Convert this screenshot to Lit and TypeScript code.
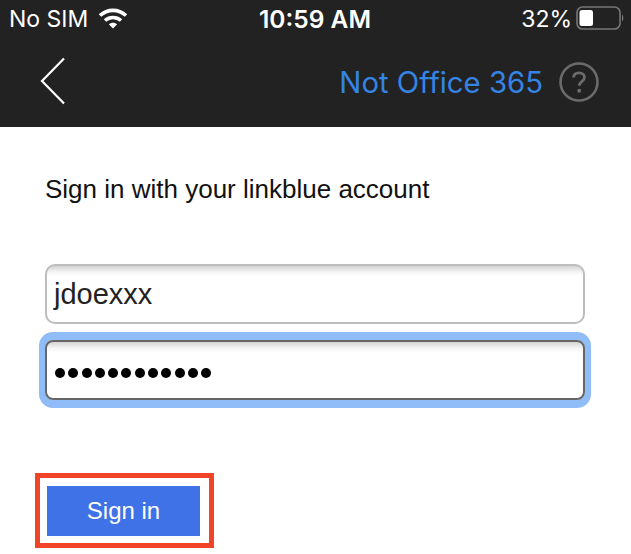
import { LitElement, css, html } from 'lit'
import { customElement } from 'lit/decorators.js'

@customElement('app-root')
export class AppRoot extends LitElement {
  static styles = css`
    :host {
      display: block;
      width: 631px;
      height: 554px;
      overflow: hidden;
      background: #fff;
      font-family: 'Liberation Sans', Arial, sans-serif;
    }
    .top {
      height: 127px;
      background: #222;
      box-sizing: border-box;
    }
    .status {
      height: 37px;
      display: grid;
      grid-template-columns: 1fr auto 1fr;
      align-items: center;
      padding: 0 7px 0 9px;
      color: #fff;
      font-family: Inter, 'Liberation Sans', sans-serif;
      font-size: 23px;
    }
    .status .left, .status .right {
      display: flex;
      align-items: center;
    }
    .status .left { gap: 10px; }
    .status .right { justify-content: flex-end; gap: 4px; }
    .time { font-weight: 600; font-size: 24.5px; margin-right: 3px; }
    .wifi { display: block; }
    .battery { display: block; margin-top: -1px; }
    .nav {
      height: 90px;
      display: flex;
      align-items: center;
      padding: 0 32px 0 39px;
      box-sizing: border-box;
    }
    .back { display: block; margin-top: -2px; }
    .title {
      margin-left: auto;
      color: #3584e4;
      font-family: Inter, 'Liberation Sans', sans-serif;
      font-size: 29.3px;
    }
    .help { display: block; margin-left: 16px; }
    .content {
      padding: 47px 46px 0 45px;
    }
    .lead {
      margin: 0;
      height: 30px;
      line-height: 30px;
      font-size: 26px;
      color: #111;
    }
    .fields {
      margin-top: 60px;
      display: flex;
      flex-direction: column;
      gap: 16px;
    }
    .field {
      height: 60px;
      box-sizing: border-box;
      border: 2px solid #bdbdbd;
      border-radius: 10px;
      background: linear-gradient(#d4d4d4 0, #f4f4f4 6px, #fff 10px);
      padding: 0 7px;
      display: flex;
      align-items: center;
      font-size: 29px;
      color: #222;
    }
    .field.focus {
      border-color: #666;
      box-shadow: 0 2px 0 6px #90bdf8, 0 -2px 0 6px #90bdf8;
      border-radius: 8px;
    }
    .dots {
      display: flex;
      gap: 3.3px;
      margin-top: 5px;
      margin-left: 1px;
    }
    .dots span {
      width: 10px;
      height: 10px;
      border-radius: 50%;
      background: #000;
    }
    .actions { margin-top: 73px; margin-left: -10px; }
    .highlight {
      display: inline-block;
      border: 5px solid #f04327;
      padding: 8px 9px 7px 7px;
    }
    button {
      display: block;
      width: 153px;
      height: 50px;
      border: none;
      padding: 0;
      background: #3e72e6;
      color: #fff;
      font-family: inherit;
      font-size: 24px;
    }
  `

  render() {
    return html`
      <div class="top">
        <div class="status">
          <div class="left">
            <span>No SIM</span>
            <svg class="wifi" width="30" height="22" viewBox="0 0 30 22" fill="none" stroke="#fff" stroke-width="3.6">
              <path d="M2 7.5C9.5 .6 20.500 .6 28 7.500"/>
              <path d="M7 12.500C11.500 8.500 18.500 8.500 23 12.500"/>
              <path d="M15 20.500 10.800 16.300C13 14.200 17 14.200 19.200 16.300Z" fill="#fff" stroke="none"/>
            </svg>
          </div>
          <span class="time">10:59 AM</span>
          <div class="right">
            <span>32%</span>
            <svg class="battery" width="48" height="24" viewBox="0 0 48 24" fill="none">
              <rect x="1" y="1" width="43" height="22" rx="5.500" stroke="#777" stroke-width="1.600"/>
              <rect x="3.500" y="4" width="13.500" height="16" rx="2.500" fill="#fff"/>
              <path d="M46 8.500C47.800 9.500 47.800 14.500 46 15.500Z" fill="#777"/>
            </svg>
          </div>
        </div>
        <div class="nav">
          <svg class="back" width="28" height="48" viewBox="0 0 28 48" fill="none" stroke="#fff" stroke-width="2.200">
            <path d="M25 1.500 3 24 25 46.500"/>
          </svg>
          <span class="title">Not Office 365</span>
          <svg class="help" width="40" height="40" viewBox="0 0 40 40" fill="none">
            <circle cx="20" cy="20" r="18.500" stroke="#6b6b6b" stroke-width="2.600"/>
            <path d="M14.500 15.500C14.700 12.400 17 10.800 20 10.800 23.200 10.800 25.500 12.700 25.500 15.500 25.500 19.300 20.200 19.500 20.200 23.800" stroke="#6b6b6b" stroke-width="2.800"/>
            <circle cx="20.200" cy="28.800" r="2" fill="#6b6b6b"/>
          </svg>
        </div>
      </div>
      <div class="content">
        <p class="lead">Sign in with your linkblue account</p>
        <div class="fields">
          <div class="field">jdoexxx</div>
          <div class="field focus">
            <div class="dots">
              ${Array.from({ length: 12 }, () => html`<span></span>`)}
            </div>
          </div>
        </div>
        <div class="actions">
          <div class="highlight"><button>Sign in</button></div>
        </div>
      </div>
    `
  }
}
